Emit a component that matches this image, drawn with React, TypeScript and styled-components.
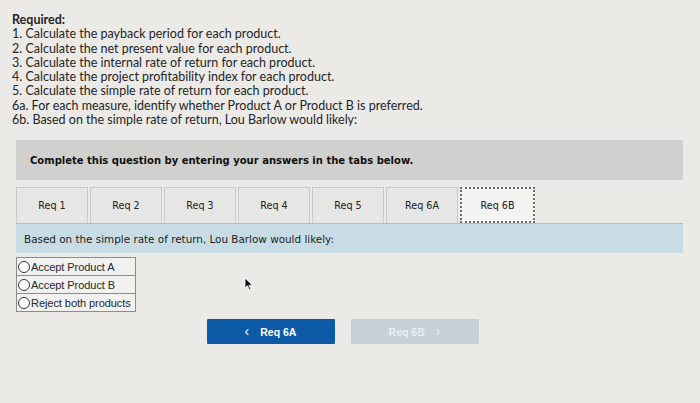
import React, { useState } from 'react';
import styled, { createGlobalStyle } from 'styled-components';

const GlobalStyle = createGlobalStyle`
  html, body {
    margin: 0;
    padding: 0;
    background: #ebeae7;
  }
  body {
    width: 700px;
    height: 403px;
    overflow: hidden;
  }
`;

const Page = styled.div`
  position: relative;
  padding: 13px 17px 0 12px;
  color: #1d1d1d;
`;

const Intro = styled.div`
  font-family: "Lato", "Liberation Sans", sans-serif;
  font-size: 12.5px;
  line-height: 14.3px;
  color: #252525;
`;

const Line = styled.div<{ bold?: boolean }>`
  font-weight: ${(p) => (p.bold ? 700 : 400)};
`;

const Question = styled.div`
  margin: 0 0 0 4px;
  display: flex;
  flex-direction: column;
`;

const Banner = styled.div`
  margin-top: 13px;
  height: 40px;
  background: #d0d0ce;
  display: flex;
  align-items: center;
  padding-left: 14px;
  font-family: "DejaVu Sans", Verdana, sans-serif;
  font-weight: 700;
  font-size: 10px;
  color: #111;
`;

const Tabs = styled.div`
  margin-top: 7px;
  display: flex;
  gap: 2px;
  height: 36px;
`;

const Tab = styled.button<{ active?: boolean }>`
  height: 100%;
  padding: 0;
  background: ${(p) => (p.active ? '#f3f3f1' : '#e6e6e4')};
  border: ${(p) => (p.active ? '2px dotted #6d6d6d' : '1px solid #c9c9c7')};
  border-bottom: ${(p) => (p.active ? '2px dotted #6d6d6d' : 'none')};
  font-family: "DejaVu Sans", Verdana, sans-serif;
  font-size: 9.6px;
  color: #222;
  cursor: pointer;
  width: ${(p) => (p.active ? '75px' : '72px')};
`;

const Prompt = styled.div`
  height: 29px;
  background: #c8dce5;
  border-top: 1px solid #a9c1cc;
  display: flex;
  align-items: center;
  padding-left: 8px;
  font-family: "DejaVu Sans", Verdana, sans-serif;
  font-size: 10.4px;
  color: #1c1c1c;
`;

const Choices = styled.div`
  margin-top: 4px;
  width: 118px;
  border: 1px solid #8c8c8c;
  background: #f1f1ef;
`;

const Choice = styled.label`
  display: flex;
  align-items: center;
  height: 17px;
  font-family: "Liberation Sans", Arial, sans-serif;
  font-size: 11.1px;
  letter-spacing: -0.1px;
  color: #2a2a2a;
  cursor: pointer;
  white-space: nowrap;
  & + & {
    border-top: 1px solid #8c8c8c;
  }
`;

const Radio = styled.span<{ checked?: boolean }>`
  width: 10px;
  height: 10px;
  border-radius: 50%;
  border: 1.3px solid #3a3a3a;
  margin: 0 1px 0 1px;
  background: ${(p) => (p.checked ? 'radial-gradient(#333 35%, #fff 40%)' : '#fff')};
  flex-shrink: 0;
`;

const Nav = styled.div`
  margin-top: 7px;
  display: flex;
  justify-content: center;
  gap: 16px;
  padding-right: 14px;
`;

const NavButton = styled.button<{ disabled?: boolean }>`
  width: 128px;
  height: 25px;
  border: none;
  border-radius: 1px;
  background: ${(p) => (p.disabled ? '#c6d0d8' : '#0c5aa6')};
  color: ${(p) => (p.disabled ? '#e9eef2' : '#ffffff')};
  font-family: "Liberation Sans", Arial, sans-serif;
  font-weight: 700;
  font-size: 10.5px;
  display: flex;
  align-items: center;
  justify-content: center;
  gap: 11px;
`;

const Chevron = styled.span`
  font-weight: 400;
  font-size: 14px;
  line-height: 1;
  margin-top: -2px;
`;

const Cursor = styled.svg`
  position: absolute;
  left: 244px;
  top: 277px;
`;

const intro = [
  '1. Calculate the payback period for each product.',
  '2. Calculate the net present value for each product.',
  '3. Calculate the internal rate of return for each product.',
  '4. Calculate the project profitability index for each product.',
  '5. Calculate the simple rate of return for each product.',
  '6a. For each measure, identify whether Product A or Product B is preferred.',
  '6b. Based on the simple rate of return, Lou Barlow would likely:',
];

const tabs = ['Req 1', 'Req 2', 'Req 3', 'Req 4', 'Req 5', 'Req 6A', 'Req 6B'];
const options = ['Accept Product A', 'Accept Product B', 'Reject both products'];

const App: React.FC = () => {
  const [choice, setChoice] = useState<number | null>(null);

  return (
    <>
      <GlobalStyle />
      <Page>
        <Intro>
          <Line bold>Required:</Line>
          {intro.map((t) => (
            <Line key={t}>{t}</Line>
          ))}
        </Intro>
        <Question>
          <Banner>Complete this question by entering your answers in the tabs below.</Banner>
          <Tabs>
            {tabs.map((t) => (
              <Tab key={t} active={t === 'Req 6B'}>
                {t}
              </Tab>
            ))}
          </Tabs>
          <Prompt>Based on the simple rate of return, Lou Barlow would likely:</Prompt>
          <Choices>
            {options.map((o, i) => (
              <Choice key={o} onClick={() => setChoice(i)}>
                <Radio checked={choice === i} />
                {o}
              </Choice>
            ))}
          </Choices>
          <Nav>
            <NavButton>
              <Chevron>&lsaquo;</Chevron>
              <span>Req 6A</span>
            </NavButton>
            <NavButton disabled>
              <span>Req 6B</span>
              <Chevron>&rsaquo;</Chevron>
            </NavButton>
          </Nav>
        </Question>
        <Cursor width="10" height="14" viewBox="0 0 10 14">
          <path d="M1 1 L1 11 L3.5 8.8 L5.5 13 L7 12.3 L5 8.2 L8.5 8.2 Z" fill="#111" stroke="#fff" strokeWidth="0.8" />
        </Cursor>
      </Page>
    </>
  );
};

export default App;
